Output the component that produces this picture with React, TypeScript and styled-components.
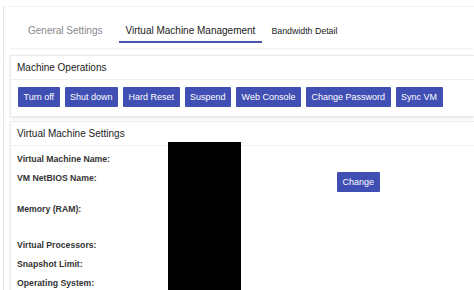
import React from "react";
import styled, { createGlobalStyle } from "styled-components";

const GlobalStyle = createGlobalStyle`
  html, body {
    margin: 0;
    padding: 0;
    background: #ffffff;
    font-family: "Liberation Sans", Arial, sans-serif;
    color: #333;
  }
`;

const Frame = styled.div`
  margin-left: 3px;
  border-left: 1px solid #e4e4e4;
  border-top: 1px solid #f0f0f0;
  margin-top: 6px;
  height: 283px;
  overflow: hidden;
  padding-left: 6px;
`;

const TabBar = styled.div`
  display: flex;
  align-items: flex-end;
  height: 41px;
  box-sizing: border-box;
  padding: 0 0 5px 11px;
  box-shadow: 0 2px 2px -1px rgba(0, 0, 0, 0.08);
  margin-bottom: 7px;
`;

const Tab = styled.div<{ active?: boolean; small?: boolean; gap: number }>`
  padding: 0 7px 4px;
  margin-right: ${(p) => p.gap}px;
  line-height: 12px;
  font-size: ${(p) => (p.small ? "8.8px" : "10px")};
  color: ${(p) => (p.active || p.small ? "#222" : "#8a8a8a")};
  border-bottom: 2px solid ${(p) => (p.active ? "#4a55b0" : "transparent")};
  white-space: nowrap;
`;

const Card = styled.section`
  background: #fff;
  border: 1px solid #ececec;
  border-right: none;
  box-shadow: 0 1px 3px rgba(0, 0, 0, 0.1);
  margin-bottom: 4px;
`;

const CardHeader = styled.div`
  height: 23px;
  display: flex;
  align-items: center;
  padding-left: 6px;
  font-size: 10px;
  color: #222;
  border-bottom: 1px solid #f0f0f0;
`;

const ButtonRow = styled.div`
  display: flex;
  gap: 5px;
  padding: 7px 7px 9px;
`;

const Button = styled.button`
  height: 20px;
  padding: 0 5.5px;
  background: #3f4fb4;
  color: #fff;
  border: none;
  border-radius: 1px;
  font-family: "Liberation Sans", Arial, sans-serif;
  font-size: 9px;
  white-space: nowrap;
  cursor: pointer;
`;

const SettingsBody = styled.div`
  position: relative;
  padding: 7px 6px 0;
`;

const Row = styled.div<{ h: number }>`
  display: grid;
  grid-template-columns: 150px 1fr;
  height: ${(p) => p.h}px;
`;

const Label = styled.div`
  font-size: 8.7px;
  font-weight: bold;
  line-height: 10px;
  color: #333;
  padding-top: 1px;
`;

const Value = styled.div`
  display: flex;
  justify-content: flex-start;
  padding-left: 170px;
`;

const Redaction = styled.div`
  position: absolute;
  left: 157px;
  top: -4px;
  width: 73px;
  height: 160px;
  background: #000;
`;

const operations = [
  "Turn off",
  "Shut down",
  "Hard Reset",
  "Suspend",
  "Web Console",
  "Change Password",
  "Sync VM",
];

export default function App(): JSX.Element {
  return (
    <>
      <GlobalStyle />
      <Frame>
        <TabBar>
          <Tab gap={9}>General Settings</Tab>
          <Tab gap={2} active>
            Virtual Machine Management
          </Tab>
          <Tab gap={0} small>
            Bandwidth Detail
          </Tab>
        </TabBar>
        <Card>
          <CardHeader>Machine Operations</CardHeader>
          <ButtonRow>
            {operations.map((op) => (
              <Button key={op}>{op}</Button>
            ))}
          </ButtonRow>
        </Card>
        <Card>
          <CardHeader>Virtual Machine Settings</CardHeader>
          <SettingsBody>
            <Row h={19}>
              <Label>Virtual Machine Name:</Label>
            </Row>
            <Row h={31}>
              <Label>VM NetBIOS Name:</Label>
              <Value>
                <Button>Change</Button>
              </Value>
            </Row>
            <Row h={36}>
              <Label>Memory (RAM):</Label>
            </Row>
            <Row h={19}>
              <Label>Virtual Processors:</Label>
            </Row>
            <Row h={19}>
              <Label>Snapshot Limit:</Label>
            </Row>
            <Row h={19}>
              <Label>Operating System:</Label>
            </Row>
            <Redaction />
          </SettingsBody>
        </Card>
      </Frame>
    </>
  );
}
